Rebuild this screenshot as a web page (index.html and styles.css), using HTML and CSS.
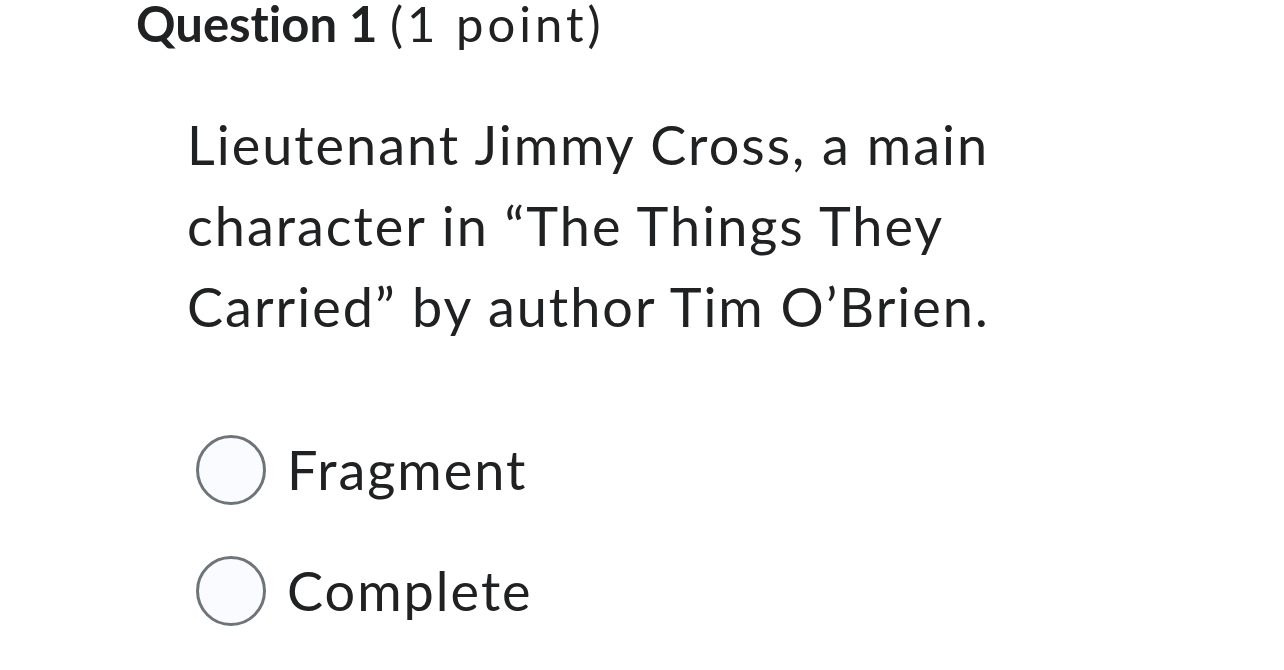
FILE: index.html
```html
<!DOCTYPE html>
<html>
<head>
<meta charset="utf-8">
<link rel="stylesheet" href="styles.css">
</head>
<body>
<div class="question">
  <h2 class="q-title"><strong>Question 1</strong> <span class="pts">(1 point)</span></h2>
  <div class="q-body">
    <p class="q-text">Lieutenant Jimmy Cross, a main character in “The Things They Carried” by author Tim O’Brien.</p>
    <div class="options">
      <label class="option"><span class="radio"></span><span class="opt-label">Fragment</span></label>
      <label class="option"><span class="radio"></span><span class="opt-label">Complete</span></label>
    </div>
  </div>
</div>
</body>
</html>
```
FILE: styles.css
```css
html, body {
  margin: 0;
  padding: 0;
  background: #ffffff;
}
body {
  font-family: Lato, "Noto Sans", sans-serif;
  color: #202122;
  font-variant-ligatures: none;
  font-feature-settings: "liga" 0, "clig" 0;
}
.question {
  padding-left: 136px;
}
.q-title {
  margin: 0;
  font-size: 49px;
  line-height: 54px;
  font-weight: 400;
  margin-top: -4px;
  white-space: nowrap;
}
.q-title strong {
  font-weight: 700;
}
.pts {
  letter-spacing: 4px;
}
.q-body {
  padding-left: 51px;
}
.q-text {
  margin: 0;
  margin-top: 54px;
  width: 840px;
  font-size: 54px;
  line-height: 81px;
  letter-spacing: 2px;
}
.options {
  margin-top: 88px;
  display: flex;
  flex-direction: column;
  gap: 51px;
  padding-left: 9px;
}
.option {
  display: flex;
  align-items: center;
  gap: 21px;
  font-size: 54px;
  line-height: 70px;
  letter-spacing: 2px;
}
.radio {
  width: 64px;
  height: 64px;
  border: 3px solid #6e7477;
  border-radius: 50%;
  background: #f9fbff;
  flex: none;
}
```
